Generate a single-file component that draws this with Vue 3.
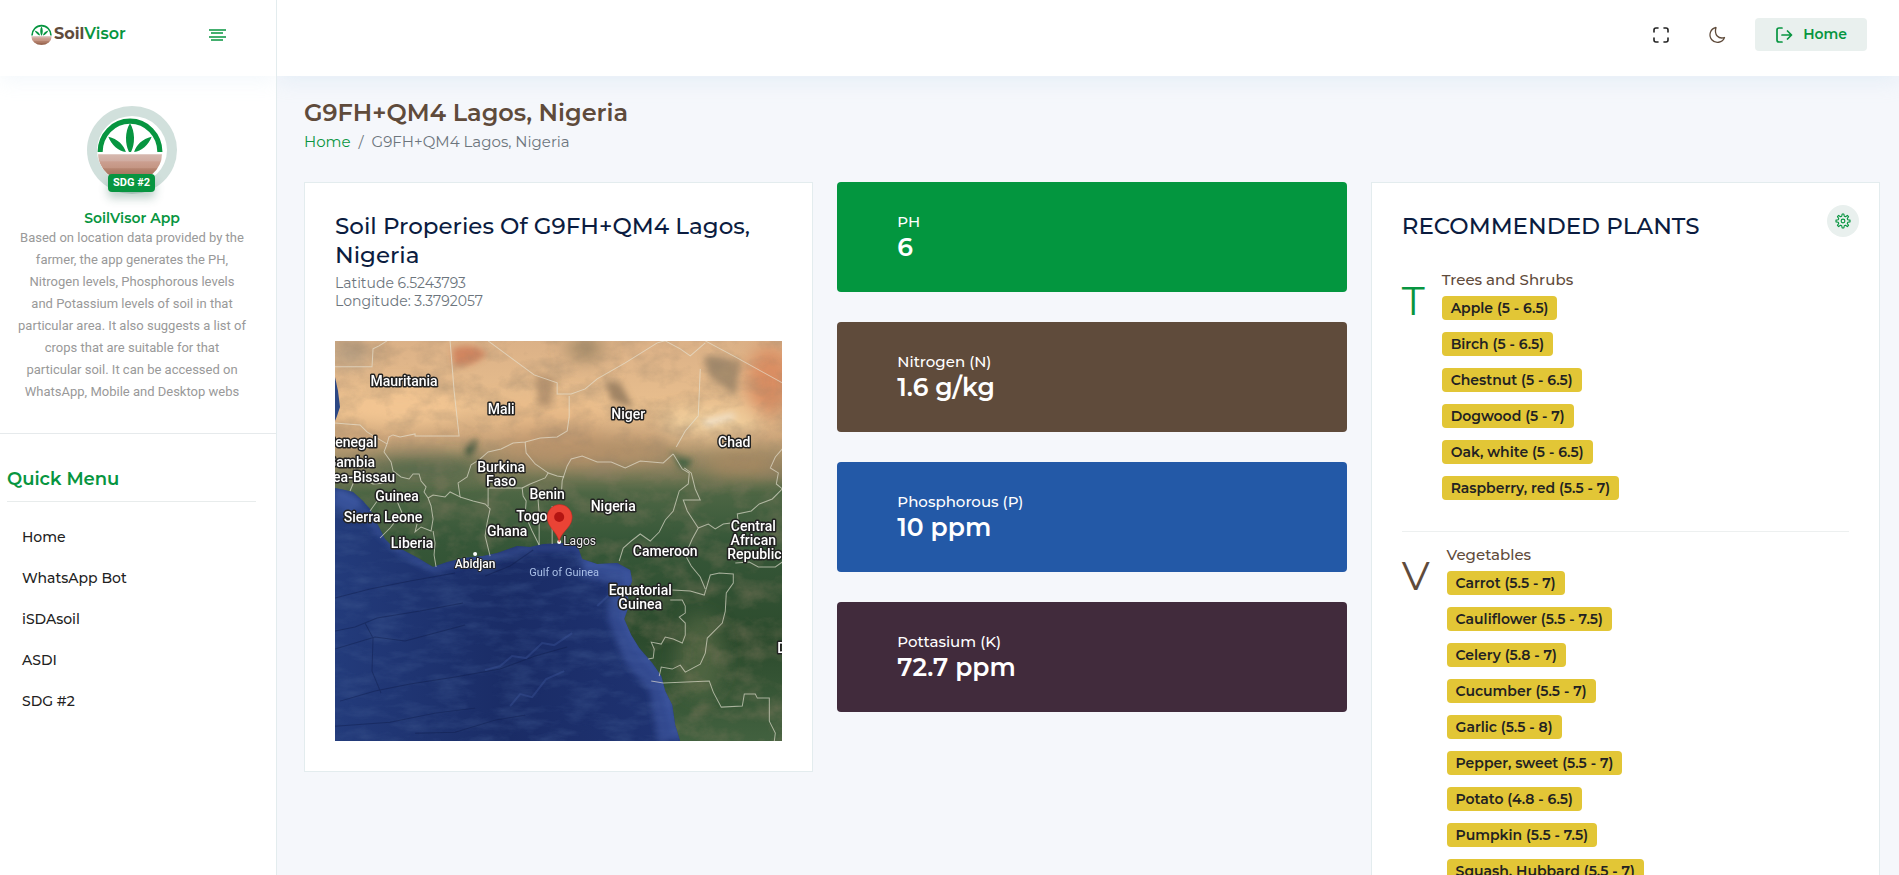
<script setup>
const about = [
  'Based on location data provided by the',
  'farmer, the app generates the PH,',
  'Nitrogen levels, Phosphorous levels',
  'and Potassium levels of soil in that',
  'particular area. It also suggests a list of',
  'crops that are suitable for that',
  'particular soil. It can be accessed on',
  'WhatsApp, Mobile and Desktop webs',
].join('\n')

const menu = ['Home', 'WhatsApp Bot', 'iSDAsoil', 'ASDI', 'SDG #2']

const stats = [
  { label: 'PH', value: '6', tone: 'green' },
  { label: 'Nitrogen (N)', value: '1.6 g/kg', tone: 'brown' },
  { label: 'Phosphorous (P)', value: '10 ppm', tone: 'blue' },
  { label: 'Pottasium (K)', value: '72.7 ppm', tone: 'plum' },
]

const groups = [
  {
    letter: 'T',
    tone: 'green-text',
    name: 'Trees and Shrubs',
    plants: ['Apple (5 - 6.5)', 'Birch (5 - 6.5)', 'Chestnut (5 - 6.5)', 'Dogwood (5 - 7)', 'Oak, white (5 - 6.5)', 'Raspberry, red (5.5 - 7)'],
  },
  {
    letter: 'V',
    tone: 'brown-text',
    name: 'Vegetables',
    plants: ['Carrot (5.5 - 7)', 'Cauliflower (5.5 - 7.5)', 'Celery (5.8 - 7)', 'Cucumber (5.5 - 7)', 'Garlic (5.5 - 8)', 'Pepper, sweet (5.5 - 7)', 'Potato (4.8 - 6.5)', 'Pumpkin (5.5 - 7.5)', 'Squash, Hubbard (5.5 - 7)'],
  },
]

const places = [
  ['Mauritania', 69, 45], ['Mali', 166, 73], ['Niger', 293, 78], ['Chad', 399, 106],
  ['Senegal', 42, 106, 'end'], ['Gambia', 40, 126, 'end'], ['Guinea-Bissau', 60, 141, 'end'],
  ['Guinea', 62, 160], ['Sierra Leone', 48, 181], ['Liberia', 77, 207],
  ['Burkina', 166, 131], ['Faso', 166, 145], ['Benin', 212, 158], ['Togo', 181, 180, 'start'],
  ['Ghana', 172, 195], ['Nigeria', 278, 170], ['Central', 418, 190], ['African', 418, 204],
  ['Republic', 392, 218, 'start'], ['Cameroon', 330, 215], ['Equatorial', 305, 254],
  ['Guinea', 305, 268], ['DRC', 442, 312, 'start'],
].map(([name, x, y, anchor = 'middle']) => ({ name, x, y, anchor }))

const borders = [
  '0,26 37,26 38,8 44,5 52,0',
  '115,0 119,50 124,95 80,95 80,93 65,96 58,94 54,96 52,103',
  '0,82 12,83 25,84 32,91 40,96 52,103 49,111 56,121 58,130 66,136 74,138 78,133 84,133 86,140 91,146 89,151 93,157',
  '0,118 12,120 20,128 18,141 30,139 38,143 52,142',
  '15,150 20,138',
  '35,170 45,156 62,160 67,172 55,187 45,197',
  '93,157 96,165 98,178 96,190 86,186 80,191 82,183',
  '98,190 100,202 99,214 101,226',
  '93,157 98,154 110,156 115,151 125,156 123,142 132,136 136,124 144,119 153,111 166,108 178,102 190,101 205,97 222,96 232,90 234,76 234,55',
  '125,156 138,160 150,163 155,168 152,182 150,195 155,215',
  '153,0 180,20 199,34 222,42 222,53 236,53 250,48 262,38 290,22 322,2 330,0',
  '330,0 345,8 355,15 370,2',
  '370,0 400,16 447,42',
  '365,28 363,75 350,90 341,106',
  '153,165 153,147 187,147 188,155 191,160 190,174 197,190 204,204',
  '187,147 195,143 210,137 213,132 222,135 229,136',
  '190,101 191,112 200,123 210,130 213,132',
  '202,148 204,172 204,204',
  '217,165 217,203',
  '226,156 227,140 232,125 236,118 247,115 262,121 276,121 290,127 305,120 328,122 338,113',
  '338,113 347,128 354,132 353,143 344,150 338,170 330,179 324,191 315,200 305,193 296,200 288,207 284,220',
  '349,127 356,132 360,148 365,159 348,159 352,170 363,187 357,198 350,214 356,225 365,236 370,248',
  '363,187 373,183 380,188 388,183 403,181 402,173 416,170 424,163 437,158 447,148',
  '447,108 440,116 435,127 443,132 441,143 447,148',
  '400,222 414,221 423,226 440,226 447,221',
  '337,249 355,250 369,254 375,234 384,232 398,233 398,242 391,252 390,270 387,282 372,297 370,312 365,323 350,331 345,324 337,328 326,326 324,335',
  '335,259 347,259 350,265 350,272 344,276 350,282 350,294 347,302 338,298 330,296 326,303 316,301 319,308 318,317 313,318',
  '316,340 328,342 374,340 378,351 386,366 407,365 409,353 420,353 422,357 434,357 434,380 440,392 439,400',
]

const ridges = [
  'M0 257 35 248 75 240 120 232',
  'M0 290 20 286 42 277 85 270 128 262',
  'M0 308 40 296 70 300 130 284',
  'M5 360 40 350 75 343 120 336 165 328 200 315 232 306',
  'M0 385 55 381 100 372 140 367',
  'M80 392 120 391 160 379 190 374',
  'M150 235 175 225 198 209',
  'M30 282 38 297 37 330 46 352',
]

// Cog outline with eight square teeth around a centre of 12,12
const cog = (() => {
  const pts = []
  for (let i = 0; i < 8; i++) {
    const a = (i * Math.PI) / 4
    for (const [d, r] of [[-0.26, 7.4], [-0.12, 10.6], [0.12, 10.6], [0.26, 7.4]]) {
      pts.push(`${(12 + r * Math.cos(a + d)).toFixed(2)} ${(12 + r * Math.sin(a + d)).toFixed(2)}`)
    }
  }
  return `M${pts.join('L')}Z`
})()
</script>

<template>
  <div class="app">
    <svg class="defs" aria-hidden="true">
      <defs>
        <linearGradient id="soil" x1="0" y1="0" x2="0" y2="1">
          <stop offset="0" stop-color="#d6b9b0" />
          <stop offset="0.25" stop-color="#d0aca1" />
          <stop offset="0.27" stop-color="#cb9f90" />
          <stop offset="0.5" stop-color="#c49583" />
          <stop offset="0.52" stop-color="#b58470" />
          <stop offset="0.75" stop-color="#ab7762" />
          <stop offset="0.77" stop-color="#9c6a55" />
        </linearGradient>
        <symbol id="mark" viewBox="0 0 64 64">
          <path d="M3 35a29 30 0 0 1 58 0" fill="none" stroke="#079540" stroke-width="5" />
          <path d="M32 7c5 8 5 20 1 28h-2c-4-8-4-20 1-28z" fill="#079540" />
          <path d="M11 20c9 2 15 8 17 15-7-1-14-7-17-15zM53 20c-9 2-15 8-17 15 7-1 14-7 17-15z" fill="#079540" />
          <path d="M1 37h62a31 27 0 0 1-62 0z" fill="url(#soil)" />
        </symbol>
      </defs>
    </svg>

    <aside class="sidebar">
      <div class="brand-bar">
        <a href="#" class="brand">
          <svg class="brand-mark" aria-hidden="true"><use href="#mark" /></svg>
          <span class="brand-name"><b>Soil</b>Visor</span>
        </a>
        <button class="icon-button" aria-label="Toggle sidebar">
          <svg width="18" height="14" viewBox="0 0 18 14" stroke="#079540" stroke-width="1.500">
            <path d="M1 2h17M3 5h12M1 9h17M3 12h12" />
          </svg>
        </button>
      </div>

      <section class="profile">
        <div class="avatar">
          <div class="avatar-face"><svg class="avatar-mark" aria-hidden="true"><use href="#mark" /></svg></div>
          <span class="tag">SDG #2</span>
        </div>
        <h2 class="profile-name">SoilVisor App</h2>
        <p class="about">{{ about }}</p>
      </section>

      <nav class="menu" aria-label="Quick Menu">
        <h3>Quick Menu</h3>
        <ul>
          <li v-for="item in menu" :key="item"><a href="#">{{ item }}</a></li>
        </ul>
      </nav>
    </aside>

    <div class="page">
      <header class="topbar">
        <button class="icon-button" aria-label="Full screen">
          <svg width="18" height="18" viewBox="0 0 18 18" fill="none" stroke="#222" stroke-width="1.600" stroke-linecap="round">
            <path d="M2 6V4q0-2 2-2h2M12 2h2q2 0 2 2v2M16 12v2q0 2-2 2h-2M6 16H4q-2 0-2-2v-2" />
          </svg>
        </button>
        <button class="icon-button" aria-label="Dark mode">
          <svg width="18" height="18" viewBox="0 0 18 18" fill="none" stroke="#5f4b3b" stroke-width="1.300" stroke-linejoin="round">
            <path d="M8 1.500A7.500 7.500 0 1 0 16.500 11.500Q12 13 9.200 10T8 1.500z" />
          </svg>
        </button>
        <a href="#" class="home-button">
          <svg width="18" height="18" viewBox="0 0 18 18" fill="none" stroke="currentColor" stroke-width="1.700" stroke-linecap="round" stroke-linejoin="round">
            <path d="M7 2H4Q2 2 2 4v10q0 2 2 2h3M7 9h9M12.500 5 16.500 9l-4 4" />
          </svg>
          Home
        </a>
      </header>

      <main class="content">
        <h1>G9FH+QM4 Lagos, Nigeria</h1>
        <nav class="crumbs" aria-label="Breadcrumb">
          <a href="#">Home</a><span>/</span><span>G9FH+QM4 Lagos, Nigeria</span>
        </nav>

        <div class="columns">
          <section class="card">
            <h2 class="card-title">Soil Properies Of G9FH+QM4 Lagos,<br />Nigeria</h2>
            <p class="coords">Latitude 6.5243793<br />Longitude: 3.3792057</p>
            <svg class="map" viewBox="0 0 447 400" preserveAspectRatio="xMidYMid slice" role="img" aria-label="Map of West Africa">
              <defs>
                <linearGradient id="land" x1="0" y1="0" x2="0" y2="1">
                  <stop offset="0" stop-color="#dbb187" />
                  <stop offset="0.17" stop-color="#e9bf8e" />
                  <stop offset="0.24" stop-color="#cda67b" />
                  <stop offset="0.31" stop-color="#8f8460" />
                  <stop offset="0.38" stop-color="#4d6644" />
                  <stop offset="0.5" stop-color="#365738" />
                  <stop offset="0.75" stop-color="#2c4b2d" />
                  <stop offset="1" stop-color="#42613f" />
                </linearGradient>
                <linearGradient id="sea" x1="0" y1="0" x2="1" y2="0">
                  <stop offset="0" stop-color="#233b7b" />
                  <stop offset="0.5" stop-color="#1a2c66" />
                  <stop offset="1" stop-color="#1f3372" />
                </linearGradient>
                <filter id="soft" x="-50%" y="-50%" width="200%" height="200%"><feGaussianBlur stdDeviation="9" /></filter>
                <filter id="blurry" x="-50%" y="-50%" width="200%" height="200%"><feGaussianBlur stdDeviation="3" /></filter>
                <filter id="terrain" x="0" y="0" width="100%" height="100%">
                  <feTurbulence type="fractalNoise" baseFrequency="0.035 0.05" numOctaves="5" seed="8" />
                  <feColorMatrix values="0 0 0 0 0.3  0 0 0 0 0.22  0 0 0 0 0.14  1.6 0 0 0 -0.65" />
                </filter>
                <filter id="seabed" x="0" y="0" width="100%" height="100%">
                  <feTurbulence type="fractalNoise" baseFrequency="0.03 0.09" numOctaves="5" seed="3" />
                  <feColorMatrix values="0 0 0 0 0.05  0 0 0 0 0.1  0 0 0 0 0.28  1.5 0 0 0 -0.6" />
                </filter>
                <path id="ocean" d="M0 147 10 149 18 151 28 160 35 168 42 182 50 198 58 206 68 209 83 217 98 226 112 221 128 217 148 215 162 212 182 205 195 206 208 203 228 202 242 204 247 218 262 223 282 222 295 229 297 240 292 252 294 264 289 278 296 294 304 307 317 322 326 335 330 350 337 364 340 384 345 400H0z" />
                <clipPath id="ocean-clip"><use href="#ocean" /></clipPath>
              </defs>
              <rect width="447" height="400" fill="url(#land)" />
              <g filter="url(#soft)">
                <ellipse cx="65" cy="65" rx="60" ry="18" fill="#f2c592" />
                <ellipse cx="210" cy="72" rx="60" ry="14" fill="#e9bb89" />
                <ellipse cx="375" cy="82" rx="50" ry="12" fill="#f6d5a2" />
                <ellipse cx="435" cy="40" rx="24" ry="35" fill="#d98d62" />
                <ellipse cx="250" cy="8" rx="20" ry="12" fill="#a38a68" />
                <ellipse cx="15" cy="12" rx="20" ry="14" fill="#b9a184" />
                <ellipse cx="220" cy="92" rx="50" ry="8" fill="#c49b72" />
                <ellipse cx="250" cy="112" rx="90" ry="12" fill="#b49069" />
                <ellipse cx="410" cy="124" rx="40" ry="10" fill="#a98962" />
                <ellipse cx="90" cy="128" rx="60" ry="10" fill="#4b6547" />
                <ellipse cx="365" cy="315" rx="24" ry="42" fill="#6a7650" opacity="0.5" />
              </g>
              <g filter="url(#blurry)">
                <path d="M117 8q20-8 35 5-15 14-33 12z" fill="#cb7250" opacity="0.7" />
                <path d="M368 15l38 5-6 34-26-18z" fill="#8f7b60" opacity="0.7" />
                <path d="M270 40l15 2 13 24-22-6z" fill="#8e765a" opacity="0.8" />
                <path d="M200 32l20 6-5 28-12-2z" fill="#987c5e" opacity="0.6" />
                <path d="M130 108l12-12-2 14-8 7z" fill="#3e573e" />
                <path d="M334 109l10 7 14 3-10 12z" fill="#3c6041" />
                <path d="M366 80l30-8 6 4-30 10z" fill="#efe7dc" opacity="0.7" />
              </g>
              <rect width="447" height="400" filter="url(#terrain)" opacity="0.5" />
              <use href="#ocean" fill="url(#sea)" />
              <g clip-path="url(#ocean-clip)">
                <rect width="447" height="400" filter="url(#seabed)" opacity="0.6" />
                <g filter="url(#blurry)" fill="none" stroke="#4560ad">
                  <path d="M0 150 20 158 45 192 68 212 98 228 130 220 160 215 195 207 242 206 250 222 292 228 293 250 289 278 304 307 326 335 340 384 345 400" stroke-width="6" opacity="0.5" />
                  <path d="M248 224 290 235 283 275 300 317 325 345 334 400" stroke-width="22" opacity="0.5" />
                  <path d="M0 155 22 168" stroke-width="18" opacity="0.6" />
                </g>
                <g fill="none" stroke="#0e1b48" opacity="0.4">
                  <path v-for="d in ridges" :key="d" :d="d" />
                </g>
                <path d="M150 329l15-4 12-10 14 2 16-15 12 2 18-12M175 365l10-12 12 3 14-18 18-8M262 265l15-14" fill="none" stroke="#4560a8" stroke-width="2" opacity="0.3" />
              </g>
              <path d="M0 36 3 50 5 66 2 75 0 80z" fill="#2c4784" />
              <g fill="none" stroke="#e6e3d4" stroke-opacity="0.65">
                <polyline v-for="b in borders" :key="b" :points="b" />
              </g>
              <g class="place">
                <text v-for="p in places" :key="p.name + p.y" :x="p.x" :y="p.y" :text-anchor="p.anchor">{{ p.name }}</text>
              </g>
              <text class="city" x="228" y="204">Lagos</text>
              <text class="city capital" x="140" y="227" text-anchor="middle">Abidjan</text>
              <text class="water" x="229" y="235" text-anchor="middle">Gulf of Guinea</text>
              <circle cx="140" cy="213" r="2" fill="#fff" />
              <circle cx="224" cy="201" r="2" fill="#fff" />
              <path d="M224 201c-2-11-12-14-12-25a12 12 0 0 1 25 0c0 11-11 14-13 25z" fill="#ea4335" stroke="#c5221f" stroke-width="0.500" />
              <circle cx="224" cy="176" r="5" fill="#b31412" />
            </svg>
          </section>

          <div class="stats">
            <section v-for="s in stats" :key="s.label" class="stat" :class="s.tone">
              <span class="stat-label">{{ s.label }}</span>
              <strong>{{ s.value }}</strong>
            </section>
          </div>

          <section class="card plants">
            <button class="settings" aria-label="Settings">
              <svg width="16" height="16" viewBox="0 0 24 24" fill="none" stroke="currentColor" stroke-width="1.700" stroke-linejoin="round">
                <path :d="cog" /><circle cx="12" cy="12" r="2.800" />
              </svg>
            </button>
            <h2 class="card-title">RECOMMENDED PLANTS</h2>
            <div v-for="g in groups" :key="g.name" class="group">
              <div class="letter" :class="g.tone">{{ g.letter }}</div>
              <div>
                <h3>{{ g.name }}</h3>
                <ul class="badges">
                  <li v-for="p in g.plants" :key="p">{{ p }}</li>
                </ul>
              </div>
            </div>
          </section>
        </div>
      </main>
    </div>
  </div>
</template>

<style>
body {
  margin: 0;
  background: #f5f7fb;
}
</style>

<style scoped>
.app {
  display: grid;
  grid-template-columns: 277px 1fr;
  min-height: 100vh;
  font-family: Montserrat, Inter, "Liberation Sans", sans-serif;
  font-size: 14px;
  color: #222;
}
.app * { box-sizing: border-box; }
h1, h2, h3, p, ul { margin: 0; padding: 0; font-weight: 500; }
ul { list-style: none; }
a { color: inherit; text-decoration: none; }
button { border: 0; background: none; padding: 0; cursor: pointer; }
svg { display: block; }
.defs { position: absolute; width: 0; height: 0; }

.sidebar {
  position: relative;
  z-index: 1;
  overflow: hidden;
  background: #fff;
  border-right: 1px solid #e3ecee;
}
.brand-bar {
  display: flex;
  align-items: flex-start;
  justify-content: space-between;
  height: 76px;
  padding: 23px 50px 0 31px;
  box-shadow: 0 4px 20px rgba(190, 215, 235, 0.2);
}
.brand { display: flex; align-items: center; gap: 2px; }
.brand-mark { width: 21px; height: 21px; }
.brand-name { font-size: 16px; line-height: 22px; font-weight: 600; color: #079540; }
.brand-name b { font-weight: 700; color: #5f4b3b; }
.brand-bar .icon-button { padding-top: 5px; }

.profile {
  padding: 30px 12px 30px 0;
  border-bottom: 1px solid #e6eaec;
  text-align: center;
}
.avatar {
  position: relative;
  width: 90px;
  height: 88px;
  margin: 0 auto;
  padding: 10px;
  border-radius: 50%;
  background: #d1e0dc;
}
.avatar-face { width: 70px; height: 68px; border-radius: 50%; background: #fff; overflow: hidden; }
.avatar-mark { width: 66px; height: 66px; }
.tag {
  position: absolute;
  left: 21px;
  bottom: 2px;
  width: 47px;
  border-radius: 4px;
  background: #079540;
  color: #fff;
  font: 700 11px/18px Roboto, sans-serif;
  box-shadow: 0 6px 10px rgba(40, 100, 80, 0.3);
}
.profile-name { margin-top: 15px; font-size: 14px; line-height: 18px; font-weight: 600; color: #079540; }
.about { font: 400 13px/22px Roboto, sans-serif; color: #999; white-space: pre-line; }

.menu { padding: 33px 20px 0 7px; }
.menu h3 { padding-bottom: 10px; border-bottom: 1px solid #e8ecec; font-size: 18px; line-height: 24px; font-weight: 600; color: #079540; }
.menu ul { padding: 15px 15px 0; }
.menu a { display: block; font-size: 14px; line-height: 41px; font-weight: 500; }

.page { min-width: 0; }
.topbar {
  display: flex;
  align-items: flex-start;
  justify-content: flex-end;
  height: 76px;
  padding: 18px 32px 0;
  background: #fff;
  box-shadow: 0 4px 20px rgba(190, 215, 240, 0.3);
}
.topbar .icon-button { padding: 8px 0; margin-right: 38px; }
.topbar .icon-button + .icon-button { margin-right: 29px; }
.home-button {
  display: flex;
  align-items: center;
  gap: 10px;
  padding: 0 20px;
  border-radius: 4px;
  background: #e9f0ee;
  color: #079540;
  font-size: 14px;
  line-height: 33px;
  font-weight: 600;
}

.content { padding: 21px 19px 30px 27px; }
h1 { font-size: 24px; line-height: 32px; font-weight: 600; color: #5f4b3b; }
.crumbs { display: flex; gap: 8px; margin: 4px 0 31px; font-size: 15px; line-height: 18px; color: #6c757d; }
.crumbs a { color: #079540; }

.columns { display: grid; grid-template-columns: repeat(3, 1fr); gap: 24px; align-items: start; }
.card { position: relative; padding: 29px 30px 30px; background: #fff; border: 1px solid #e3ecee; }
.card-title { font-size: 23px; line-height: 29px; color: #0b1c3f; }
.coords { margin: 4px 0 31px; font-size: 14px; line-height: 18px; font-weight: 400; color: #6c757d; }
.map { width: 100%; height: 400px; }
.map text { font-family: Roboto, sans-serif; font-size: 14px; paint-order: stroke; stroke-linejoin: round; }
.place { fill: #fff; stroke: #222; stroke-width: 3px; font-weight: 500; }
.map .city { fill: #eee; stroke: #222; stroke-width: 2px; font-size: 12px; }
.map .capital { fill: #fff; font-weight: 500; }
.map .water { fill: #a9bfe6; font-size: 11px; }

.stats { display: grid; gap: 30px; }
.stat { display: flex; flex-direction: column; padding: 30px 60px; border-radius: 4px; color: #fff; }
.stat-label { font-size: 15px; line-height: 20px; font-weight: 500; }
.stat strong { font-size: 25px; line-height: 30px; font-weight: 600; }
.green { background: #03963f; }
.brown { background: #5f4b3b; }
.blue { background: #2359a7; }
.plum { background: #412b3c; }

.settings {
  position: absolute;
  top: 22px;
  right: 20px;
  display: grid;
  place-items: center;
  width: 32px;
  height: 32px;
  border-radius: 50%;
  background: #e9f0ee;
  color: #079540;
}
.plants .card-title { margin-bottom: 29px; }
.group { display: flex; gap: 17px; padding-bottom: 31px; }
.group + .group { padding-top: 13px; border-top: 1px solid #edf0f0; }
.letter { font-size: 40px; line-height: 48px; padding-top: 7px; }
.green-text { color: #079540; }
.brown-text { color: #5f4b3b; }
.group h3 { margin-bottom: 6px; font-size: 15px; line-height: 20px; color: #5f4b3b; }
.badges { display: flex; flex-direction: column; align-items: flex-start; gap: 12px; }
.badges li {
  padding: 0 9px;
  border-radius: 4px;
  background: #e2c636;
  color: #222;
  font-size: 14px;
  line-height: 24px;
  font-weight: 600;
}
</style>
